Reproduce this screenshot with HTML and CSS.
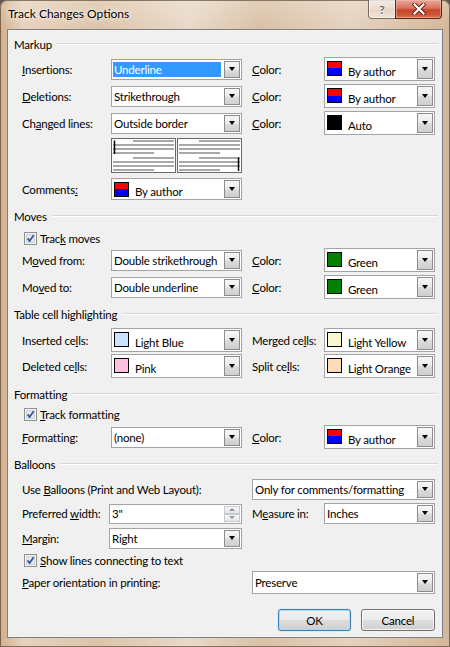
FILE: index.html
```html
<!DOCTYPE html>
<html>
<head>
<meta charset="utf-8">
<title>Track Changes Options</title>
<link rel="stylesheet" href="styles.css">
</head>
<body>
<div class="window">
  <div class="titlebar">
    <span class="title">Track Changes Options</span>
    <div class="caps">
      <span class="cap help">?</span>
      <span class="cap close">
        <svg width="14" height="12" viewBox="0 0 14 12"><path d="M2.5 1.5 L11.5 10.5 M11.5 1.5 L2.5 10.5" stroke="#5a1c12" stroke-width="4" stroke-linecap="square" fill="none"/><path d="M2.5 1.5 L11.5 10.5 M11.5 1.5 L2.5 10.5" stroke="#ffffff" stroke-width="2.2" stroke-linecap="square" fill="none"/></svg>
      </span>
    </div>
  </div>

  <div class="client">
    <div class="group t2">Markup</div>
    <div class="row t1">
      <span class="lbl"><u>I</u>nsertions:</span>
      <div class="combo"><span class="val sel">Underline</span><span class="dd"></span></div>
      <span class="lbl l2"><u>C</u>olor:</span>
      <div class="combo cc"><span class="sw author"></span><span class="val">By author</span><span class="dd"></span></div>
    </div>
    <div class="row">
      <span class="lbl"><u>D</u>eletions:</span>
      <div class="combo"><span class="val">Strikethrough</span><span class="dd"></span></div>
      <span class="lbl l2"><u>C</u>olor:</span>
      <div class="combo cc"><span class="sw author"></span><span class="val">By author</span><span class="dd"></span></div>
    </div>
    <div class="row">
      <span class="lbl">Ch<u>a</u>nged lines:</span>
      <div class="combo"><span class="val">Outside border</span><span class="dd"></span></div>
      <span class="lbl l2"><u>C</u>olor:</span>
      <div class="combo cc"><span class="sw auto"></span><span class="val">Auto</span><span class="dd"></span></div>
    </div>
    <div class="row preview-row">
      <span></span>
      <div class="preview">
        <svg width="65" height="35" viewBox="0 0 65 35">
          <rect x="0.5" y="0.5" width="64" height="34" fill="#fff" stroke="#6a6a6a"/>
          <g stroke="#a8a8a8" stroke-width="2">
            <path d="M22 3H63M2 7H63M2 11H63M2 15H43M22 20H63M2 24H63M2 28H63M2 32H43"/>
          </g>
          <path d="M3.5 2.5V16" stroke="#000" stroke-width="1.5"/>
        </svg>
        <svg width="65" height="35" viewBox="0 0 65 35">
          <rect x="0.5" y="0.5" width="64" height="34" fill="#fff" stroke="#6a6a6a"/>
          <g stroke="#a8a8a8" stroke-width="2">
            <path d="M22 3H63M2 7H63M2 11H63M2 15H43M22 20H63M2 24H63M2 28H63M2 32H43"/>
          </g>
          <path d="M61.5 19.5V33" stroke="#000" stroke-width="1.5"/>
        </svg>
      </div>
    </div>
    <div class="row t4">
      <span class="lbl">Comments<u>:</u></span>
      <div class="combo cc cm"><span class="sw author"></span><span class="val">By author</span><span class="dd"></span></div>
    </div>

    <div class="group">Moves</div>
    <div class="check t0">
      <svg class="cb" width="13" height="13" viewBox="0 0 13 13"><rect x="0.5" y="0.5" width="12" height="12" fill="#f6f6f6" stroke="#8e8f8f"/><rect x="2.5" y="2.5" width="8" height="8" fill="#e4e7ec" stroke="#cdd2d8"/><path d="M3.6 6.4 L5.6 9 L9.6 3.2" fill="none" stroke="#3b5694" stroke-width="1.8"/></svg>
      <span>Trac<u>k</u> moves</span>
    </div>
    <div class="row t0">
      <span class="lbl">M<u>o</u>ved from:</span>
      <div class="combo"><span class="val">Double strikethrough</span><span class="dd"></span></div>
      <span class="lbl l2"><u>C</u>olor:</span>
      <div class="combo cc"><span class="sw green"></span><span class="val">Green</span><span class="dd"></span></div>
    </div>
    <div class="row">
      <span class="lbl">Mo<u>v</u>ed to:</span>
      <div class="combo"><span class="val">Double underline</span><span class="dd"></span></div>
      <span class="lbl l2"><u>C</u>olor:</span>
      <div class="combo cc"><span class="sw green"></span><span class="val">Green</span><span class="dd"></span></div>
    </div>

    <div class="group">Table cell highlighting</div>
    <div class="row t2">
      <span class="lbl">Inserted ce<u>l</u>ls:</span>
      <div class="combo cc"><span class="sw lblue"></span><span class="val">Light Blue</span><span class="dd"></span></div>
      <span class="lbl l2">Merged ce<u>l</u>ls:</span>
      <div class="combo cc"><span class="sw lyellow"></span><span class="val">Light Yellow</span><span class="dd"></span></div>
    </div>
    <div class="row t2">
      <span class="lbl">Deleted ce<u>l</u>ls:</span>
      <div class="combo cc"><span class="sw pink"></span><span class="val">Pink</span><span class="dd"></span></div>
      <span class="lbl l2">Split ce<u>l</u>ls:</span>
      <div class="combo cc"><span class="sw lorange"></span><span class="val">Light Orange</span><span class="dd"></span></div>
    </div>

    <div class="group small t6">Formatting</div>
    <div class="check t0">
      <svg class="cb" width="13" height="13" viewBox="0 0 13 13"><rect x="0.5" y="0.5" width="12" height="12" fill="#f6f6f6" stroke="#8e8f8f"/><rect x="2.5" y="2.5" width="8" height="8" fill="#e4e7ec" stroke="#cdd2d8"/><path d="M3.6 6.4 L5.6 9 L9.6 3.2" fill="none" stroke="#3b5694" stroke-width="1.8"/></svg>
      <span><u>T</u>rack formatting</span>
    </div>
    <div class="row t1">
      <span class="lbl"><u>F</u>ormatting:</span>
      <div class="combo"><span class="val">(none)</span><span class="dd"></span></div>
      <span class="lbl l2"><u>C</u>olor:</span>
      <div class="combo cc"><span class="sw author"></span><span class="val">By author</span><span class="dd"></span></div>
    </div>

    <div class="group">Balloons</div>
    <div class="row t1">
      <span class="lbl wide">Use <u>B</u>alloons (Print and Web Layout):</span>
      <div class="combo span2"><span class="val">Only for comments/formatting</span><span class="dd"></span></div>
    </div>
    <div class="row t0">
      <span class="lbl">Preferred <u>w</u>idth:</span>
      <div class="spin"><span class="val">3"</span><span class="sbtns"><span class="sb up"></span><span class="sb down"></span></span></div>
      <span class="lbl l2">M<u>e</u>asure in:</span>
      <div class="combo"><span class="val">Inches</span><span class="dd"></span></div>
    </div>
    <div class="row t1">
      <span class="lbl"><u>M</u>argin:</span>
      <div class="combo shift"><span class="val">Right</span><span class="dd"></span></div>
    </div>
    <div class="check t0">
      <svg class="cb" width="13" height="13" viewBox="0 0 13 13"><rect x="0.5" y="0.5" width="12" height="12" fill="#f6f6f6" stroke="#8e8f8f"/><rect x="2.5" y="2.5" width="8" height="8" fill="#e4e7ec" stroke="#cdd2d8"/><path d="M3.6 6.4 L5.6 9 L9.6 3.2" fill="none" stroke="#3b5694" stroke-width="1.8"/></svg>
      <span><u>S</u>how lines connecting to text</span>
    </div>
    <div class="row t0">
      <span class="lbl wide"><u>P</u>aper orientation in printing:</span>
      <div class="combo span2 tall"><span class="val">Preserve</span><span class="dd"></span></div>
    </div>

    <div class="buttons">
      <span class="btn def">OK</span>
      <span class="btn">Cancel</span>
    </div>
  </div>
</div>
</body>
</html>
```
FILE: styles.css
```css
* { box-sizing: border-box; }
html, body { margin: 0; padding: 0; }
body {
  width: 450px;
  height: 647px;
  overflow: hidden;
  background: #5e554c;
  font-family: Lato, "Noto Sans", sans-serif;
  font-size: 11.5px;
  letter-spacing: -0.2px;
  color: #000;
}
u { text-underline-offset: 1px; }

.window {
  width: 450px;
  height: 647px;
  display: flex;
  flex-direction: column;
  border-radius: 7px 7px 0 0;
  background:
    linear-gradient(180deg, rgba(255,255,255,0.22), rgba(255,255,255,0) 28px),
    linear-gradient(90deg, #d1b08e 0%, #e6d2bd 5%, #dcc4a9 22%, #e9d9c8 42%, #d9c1a5 58%, #e5d2be 78%, #d3b697 100%);
  box-shadow: inset 0 0 0 1px rgba(55, 38, 22, 0.55);
}

.titlebar {
  height: 29px;
  flex: none;
  display: flex;
  justify-content: space-between;
  align-items: flex-start;
  padding: 0 8px;
}
.title {
  line-height: 28px;
  font-size: 12px;
  letter-spacing: 0;
  text-shadow: 0 0 6px rgba(255,255,255,0.9), 0 0 3px rgba(255,255,255,0.8);
}
.caps { display: flex; }
.cap {
  height: 19px;
  display: flex;
  align-items: center;
  justify-content: center;
  border: 1px solid rgba(60, 45, 35, 0.65);
  border-top: none;
}
.help {
  width: 27px;
  border-radius: 0 0 0 4px;
  border-right: none;
  background: linear-gradient(180deg, rgba(255,255,255,0.55), rgba(255,255,255,0.25) 50%, rgba(230,220,210,0.35) 51%, rgba(255,255,255,0.45));
  color: #6b6b6b;
  font-weight: bold;
  font-size: 12px;
  text-shadow: 0 1px 0 #fff;
  box-shadow: inset 0 0 0 1px rgba(255,255,255,0.5);
}
.close {
  width: 47px;
  border-radius: 0 0 4px 0;
  border-color: #5b241a;
  background: linear-gradient(180deg, #e9a89a 0%, #d9735f 45%, #c8442c 55%, #cf5a3c 85%, #e07a55 100%);
  box-shadow: inset 0 0 0 1px rgba(255,200,190,0.45);
}

.client {
  margin: 0 7px;
  height: 609px;
  flex: none;
  border: 1px solid #7d8286;
  background: #f0f0f0;
  display: flex;
  flex-direction: column;
}

.group {
  height: 24px;
  margin-top: 3px;
  padding: 0 4px 0 6px;
  display: flex;
  align-items: center;
  flex: none;
}
.group::after {
  content: "";
  flex: 1;
  margin-left: 5px;
  border-top: 1px solid #d6d6d6;
  border-bottom: 1px solid #ffffff;
}
.group.small { height: 20px; }

.row {
  height: 24px;
  margin-top: 3px;
  padding-left: 14px;
  display: grid;
  grid-template-columns: 89px 131px 82px 111px;
  align-items: center;
  flex: none;
}
.t0 { margin-top: 0; }
.t1 { margin-top: 1px; }
.t2 { margin-top: 2px; }
.t4 { margin-top: 4px; }
.t6 { margin-top: 6px; }

.lbl { white-space: nowrap; }
.l2 { padding-left: 10px; }
.wide { grid-column: 1 / 3; }
.span2 { grid-column: 3 / 5; margin-left: 10px; }

.preview-row { height: 35px; }
.preview { display: flex; gap: 1px; height: 35px; }
.preview svg { display: block; }

.combo, .spin {
  height: 21px;
  border: 1px solid #a3a3a3;
  background: #fff;
  display: flex;
  align-items: stretch;
  white-space: nowrap;
}
.combo.tall { height: 23px; }
.shift, .spin { margin-left: -2px; }
.val {
  flex: 1;
  display: flex;
  align-items: center;
  padding-left: 2px;
  overflow: hidden;
}
.val.sel {
  background: #3399ff;
  color: #fff;
  margin: 2px 2px 2px 1px;
  padding-left: 1px;
}
.dd {
  width: 16px;
  flex: none;
  margin: 1px;
  border: 1px solid #8c8c8c;
  background: linear-gradient(180deg, #f6f6f6 0%, #ebebeb 48%, #dcdcdc 52%, #cfcfcf 100%);
  display: flex;
  align-items: center;
  justify-content: center;
}
.dd::after {
  content: "";
  width: 0;
  height: 0;
  border-left: 3.5px solid transparent;
  border-right: 3.5px solid transparent;
  border-top: 4px solid #000;
}

.combo.cc { height: 24px; }
.combo.cm { height: 22px; }
.cc .val {
  align-items: flex-end;
  align-self: flex-end;
  line-height: 14px;
  padding-left: 6px;
  margin-bottom: 1px;
}
.cm .val { margin-bottom: 0; }
.cc .dd { align-self: stretch; }
.sw {
  width: 15px;
  height: 15px;
  flex: none;
  align-self: flex-end;
  margin: 0 0 4px 2px;
  border: 1px solid #000;
}
.cm .sw { margin-bottom: 2px; }
.sw.author { background: linear-gradient(180deg, #ff0000 50%, #0000ff 50%); }
.sw.auto { background: #000; }
.sw.green { background: #007f00; }
.sw.lblue { background: #c9e4ff; }
.sw.pink { background: #ffc0df; }
.sw.lyellow { background: #fbf8d0; }
.sw.lorange { background: #ffdab6; }

.spin { height: 20px; margin-top: 1px; }
.sbtns {
  width: 16px;
  flex: none;
  display: flex;
  flex-direction: column;
  margin: 1px;
}
.sb {
  flex: 1;
  border: 1px solid #c6c9cd;
  background: linear-gradient(180deg, #f8f8f8, #e6e6e6);
  display: flex;
  align-items: center;
  justify-content: center;
}
.sb.up::after {
  content: "";
  border-left: 3px solid transparent;
  border-right: 3px solid transparent;
  border-bottom: 3px solid #8b94a3;
}
.sb.down::after {
  content: "";
  border-left: 3px solid transparent;
  border-right: 3px solid transparent;
  border-top: 3px solid #8b94a3;
}

.check {
  height: 20px;
  flex: none;
  display: flex;
  align-items: center;
  padding-left: 16px;
  gap: 3px;
}
.cb { display: block; flex: none; }

.buttons {
  margin-top: 15px;
  padding-right: 7px;
  display: flex;
  justify-content: flex-end;
  gap: 10px;
  flex: none;
}
.btn {
  width: 74px;
  height: 22px;
  border: 1px solid #707070;
  border-radius: 3px;
  background: linear-gradient(180deg, #f2f2f2 0%, #ebebeb 48%, #dddddd 52%, #cfcfcf 100%);
  box-shadow: inset 0 0 0 1px rgba(255,255,255,0.75);
  display: flex;
  align-items: center;
  justify-content: center;
}
.btn.def {
  width: 73px;
  border-color: #3c7fb1;
  box-shadow: inset 0 0 0 1px #a8dcf7, 0 0 1px #5fb4e8;
}
```
